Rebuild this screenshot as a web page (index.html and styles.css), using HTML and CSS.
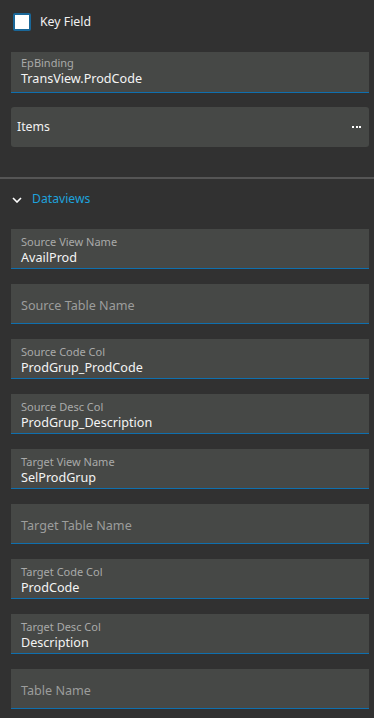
FILE: index.html
```html
<!DOCTYPE html>
<html>
<head>
<meta charset="utf-8">
<link rel="stylesheet" href="styles.css">
</head>
<body>
<div class="top">
  <label class="check-row">
    <span class="checkbox"></span>
    <span class="check-text">Key Field</span>
  </label>
  <div class="field ep">
    <div class="label">EpBinding</div>
    <div class="value">TransView.ProdCode</div>
  </div>
  <div class="items">
    <span class="items-text">Items</span>
    <span class="dots"><i></i><i></i><i></i></span>
  </div>
</div>
<div class="divider"></div>
<div class="section">
  <div class="section-head">
    <svg class="chev" width="10" height="6" viewBox="0 0 10 6"><path d="M1 1 L5 5 L9 1" fill="none" stroke="#ffffff" stroke-width="1.6"/></svg>
    <span class="section-title">Dataviews</span>
  </div>
  <div class="fields">
    <div class="field">
      <div class="label">Source View Name</div>
      <div class="value">AvailProd</div>
    </div>
    <div class="field empty">
      <div class="placeholder">Source Table Name</div>
    </div>
    <div class="field">
      <div class="label">Source Code Col</div>
      <div class="value">ProdGrup_ProdCode</div>
    </div>
    <div class="field">
      <div class="label">Source Desc Col</div>
      <div class="value">ProdGrup_Description</div>
    </div>
    <div class="field">
      <div class="label">Target View Name</div>
      <div class="value">SelProdGrup</div>
    </div>
    <div class="field empty">
      <div class="placeholder">Target Table Name</div>
    </div>
    <div class="field">
      <div class="label">Target Code Col</div>
      <div class="value">ProdCode</div>
    </div>
    <div class="field">
      <div class="label">Target Desc Col</div>
      <div class="value">Description</div>
    </div>
    <div class="field empty">
      <div class="placeholder">Table Name</div>
    </div>
  </div>
</div>
</body>
</html>
```
FILE: styles.css
```css
html, body {
  margin: 0;
  padding: 0;
  background: #313131;
  font-family: "Noto Sans", "Open Sans", sans-serif;
  color: #f2f2f2;
  overflow: hidden;
}

.top {
  padding: 13px 5px 0 11px;
}

.check-row {
  display: flex;
  align-items: center;
  height: 18px;
  padding-left: 2px;
}

.checkbox {
  width: 14px;
  height: 14px;
  border: 2px solid #1a6798;
  border-radius: 2px;
  background: #ffffff;
}

.check-text {
  margin-left: 9px;
  font-size: 12.3px;
  line-height: 16px;
}

.field {
  background: #464846;
  border-bottom: 1px solid #0f6fae;
  padding: 6px 10px 2px;
  height: 31px;
}

.field.ep {
  margin-top: 21px;
  padding: 4px 10px 5px;
}

.label {
  font-size: 11px;
  line-height: 13px;
  color: #a9aaa9;
  white-space: nowrap;
}

.value {
  margin-top: 2px;
  font-size: 12.6px;
  line-height: 16px;
  color: #f4f4f4;
  white-space: nowrap;
}

.field.empty {
  padding: 14px 10px 9px;
  height: 16px;
}

.placeholder {
  font-size: 12.6px;
  line-height: 16px;
  color: #9c9d9c;
  white-space: nowrap;
}

.items {
  margin-top: 14px;
  height: 40px;
  background: #464846;
  border-radius: 3px;
  display: flex;
  align-items: center;
  justify-content: space-between;
  padding: 0 8px 0 6px;
}

.items-text {
  font-size: 12.3px;
  line-height: 16px;
}

.dots {
  display: flex;
  gap: 1.5px;
  align-items: center;
}

.dots i {
  display: block;
  width: 2px;
  height: 2px;
  background: #ffffff;
}

.divider {
  margin-top: 30px;
  height: 2px;
  background: #555555;
}

.section {
  padding: 0 5px 0 11px;
}

.section-head {
  height: 40px;
  display: flex;
  align-items: center;
}

.chev {
  margin-left: 1px;
  margin-top: 2px;
}

.section-title {
  margin-left: 10px;
  font-size: 12.2px;
  line-height: 16px;
  color: #1ea2dc;
}

.fields {
  margin-top: 10px;
  display: flex;
  flex-direction: column;
  gap: 15px;
}
```
